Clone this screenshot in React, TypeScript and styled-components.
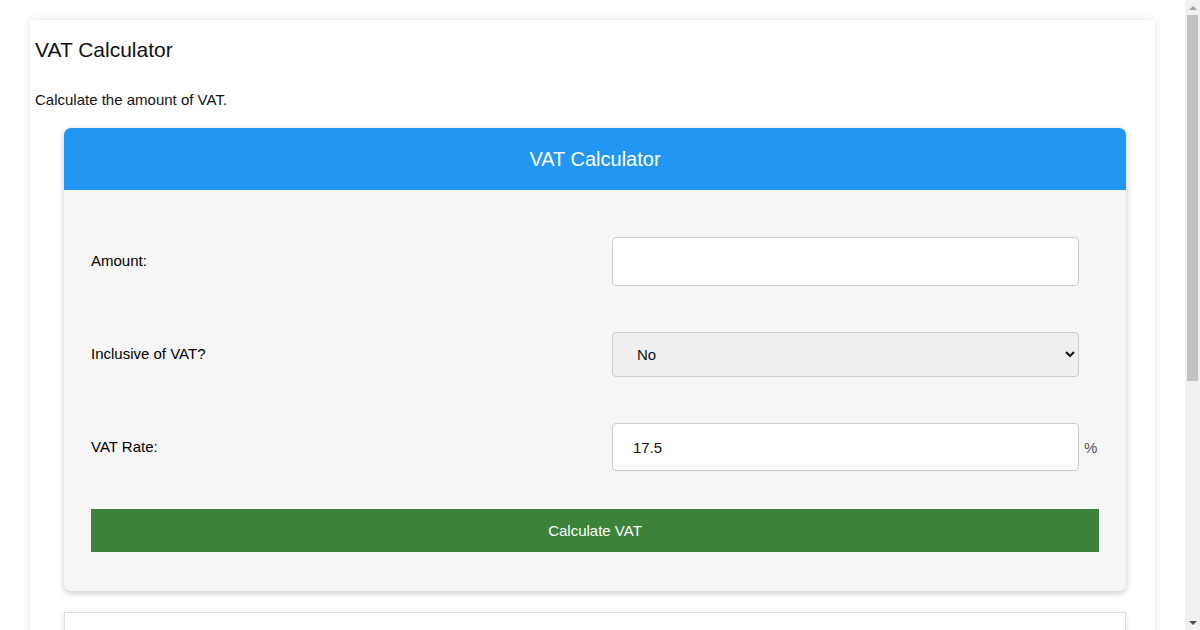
import * as React from 'react';
import styled, { createGlobalStyle } from 'styled-components';

const GlobalStyle = createGlobalStyle`
	html, body {
		margin: 0;
		padding: 0;
		background: #ffffff;
		font-family: "Liberation Sans", Arial, sans-serif;
		color: #111;
	}
`;

const Page = styled.div`
	margin: 20px 45px 20px 30px;
	padding: 18px 5px 20px 5px;
	background: #ffffff;
	box-shadow: 0 0 8px rgba(0, 0, 0, 0.12);
`;

const PageTitle = styled.h1`
	margin: 0;
	font-size: 21px;
	font-weight: normal;
	line-height: 24px;
`;

const Intro = styled.p`
	margin: 29px 0 20px 0;
	font-size: 15px;
	line-height: 17px;
`;

const Card = styled.div`
	margin: 0 24px 0 29px;
	background: #f6f6f6;
	border-radius: 7px;
	box-shadow: 0 2px 6px rgba(0, 0, 0, 0.22);
	overflow: hidden;
`;

const CardHeader = styled.div`
	height: 62px;
	background: #2196f3;
	color: #ffffff;
	display: flex;
	align-items: center;
	justify-content: center;
	font-size: 20px;
`;

const CardBody = styled.div`
	padding: 47px 27px 39px 27px;
	display: flex;
	flex-direction: column;
	gap: 46px;
`;

const Row = styled.div`
	display: flex;
	align-items: center;
`;

const Label = styled.label`
	flex: 1;
	font-size: 15px;
	color: #000;
	margin-top: -2px;
`;

const Field = styled.input<{ h: number }>`
	box-sizing: border-box;
	width: 467px;
	height: ${props => props.h}px;
	padding: 0 20px;
	border: 1px solid #cccccc;
	border-radius: 4px;
	background: #ffffff;
	font-family: "Liberation Sans", Arial, sans-serif;
	font-size: 15px;
	color: #111;
	outline: none;
`;

const Select = styled.select`
	box-sizing: border-box;
	width: 467px;
	height: 45px;
	padding: 0 6px 0 20px;
	border: 1px solid #cccccc;
	border-radius: 4px;
	background: #efefef;
	font-family: "Liberation Sans", Arial, sans-serif;
	font-size: 15px;
	color: #111;
`;

const Suffix = styled.span`
	width: 20px;
	padding-left: 5px;
	box-sizing: border-box;
	font-size: 15px;
	color: #555;
`;

const CalcButton = styled.button`
	margin-top: -8px;
	height: 43px;
	border: none;
	padding-bottom: 2px;
	background: #3b833a;
	color: #ffffff;
	font-family: "Liberation Sans", Arial, sans-serif;
	font-size: 15px;
	cursor: pointer;
`;

const ResultCard = styled.div`
	margin: 21px 24px 0 29px;
	height: 360px;
	background: #ffffff;
	border: 1px solid #dddddd;
	box-shadow: 0 2px 6px rgba(0, 0, 0, 0.12);
`;

const ScrollTrack = styled.div`
	position: fixed;
	top: 0;
	right: 0;
	width: 15px;
	height: 100vh;
	background: #f1f1f1;
	display: flex;
	flex-direction: column;
	align-items: center;
`;

const ScrollArrow = styled.div<{ down?: boolean }>`
	height: 15px;
	width: 15px;
	display: flex;
	align-items: center;
	justify-content: center;

	&::before {
		content: '';
		border-left: 4px solid transparent;
		border-right: 4px solid transparent;
		${props => props.down
		? 'border-top: 4px solid #505050;'
		: 'border-bottom: 4px solid #a3a3a3;'}
	}
`;

const ScrollThumb = styled.div`
	width: 11px;
	height: 366px;
	background: #c1c1c1;
`;

const ScrollSpace = styled.div`
	flex: 1;
`;

export default function App() {
	return (
		<>
			<GlobalStyle />
			<Page>
				<PageTitle>VAT Calculator</PageTitle>
				<Intro>Calculate the amount of VAT.</Intro>
				<Card>
					<CardHeader>VAT Calculator</CardHeader>
					<CardBody>
						<Row>
							<Label>Amount:</Label>
							<Field h={49} type="text" defaultValue="" />
							<Suffix />
						</Row>
						<Row>
							<Label>Inclusive of VAT?</Label>
							<Select defaultValue="no">
								<option value="no">No</option>
								<option value="yes">Yes</option>
							</Select>
							<Suffix />
						</Row>
						<Row>
							<Label>VAT Rate:</Label>
							<Field h={48} type="text" defaultValue="17.5" />
							<Suffix>%</Suffix>
						</Row>
						<CalcButton>Calculate VAT</CalcButton>
					</CardBody>
				</Card>
				<ResultCard />
			</Page>
			<ScrollTrack>
				<ScrollArrow />
				<ScrollThumb />
				<ScrollSpace />
				<ScrollArrow down />
			</ScrollTrack>
		</>
	);
}
